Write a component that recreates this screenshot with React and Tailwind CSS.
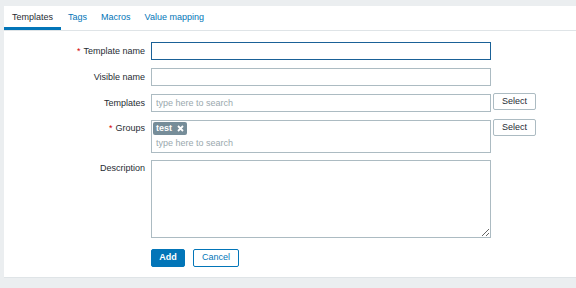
import React from 'react';

const tabs = ['Templates', 'Tags', 'Macros', 'Value mapping'];

const Label = ({ children, required, top }) => (
  <div className={`w-[147px] shrink-0 pr-[6px] text-right ${top ? 'leading-[16px]' : 'leading-[18px]'}`}>
    {required && <span className="text-[#d40000] mr-[3px]">*</span>}
    {children}
  </div>
);

const SelectButton = () => (
  <button className="ml-[2px] -mt-[1px] h-[17px] w-[43px] border border-[#acbbc2] bg-white text-[#1f2c33] rounded-[2px] leading-none">
    Select
  </button>
);

export default function App() {
  return (
    <div
      className="h-[288px] w-[576px] bg-[#ebeef0] pt-[6px] pl-[4px] overflow-hidden text-[9px] text-[#1f2c33]"
      style={{ fontFamily: '"Liberation Sans", Arial, sans-serif' }}
    >
      <div className="h-[272px] bg-white border-b border-[#dfe4e7]">
        {/* Tabs */}
        <div className="flex h-[25px] border-b border-[#dfe4e7]">
          {tabs.map((t, i) => (
            <div
              key={t}
              className={`flex items-center px-[7px] ${
                i === 0 ? 'border-b-[3px] border-[#0275b8] text-[#1f2c33] pt-[3px] pl-[8px] pr-[8px]' : 'text-[#0275b8]'
              }`}
            >
              {t}
            </div>
          ))}
        </div>

        {/* Form */}
        <div className="flex flex-col gap-[8px] pt-[11px]">
          <div className="flex h-[18px]">
            <Label required>Template name</Label>
            <input className="h-[18px] w-[340px] border border-[#1a6197] outline-none" />
          </div>

          <div className="flex h-[18px]">
            <Label>Visible name</Label>
            <input className="h-[18px] w-[340px] border border-[#acbbc2] outline-none" />
          </div>

          <div className="flex h-[18px]">
            <Label>Templates</Label>
            <input
              className="h-[18px] w-[340px] border border-[#acbbc2] px-[4px] outline-none placeholder:text-[#9aa8ae]"
              placeholder="type here to search"
            />
            <SelectButton />
          </div>

          <div className="flex">
            <Label required top>Groups</Label>
            <div className="flex h-[33px] w-[340px] flex-col border border-[#acbbc2] p-[1px]">
              <div className="flex">
                <span className="flex h-[13px] items-center gap-[5px] rounded-[2px] bg-[#768d99] px-[3px] font-bold text-white">
                  test
                  <svg width="7" height="7" viewBox="0 0 7 7">
                    <path d="M1 1 L6 6 M6 1 L1 6" stroke="white" strokeWidth="1.8" />
                  </svg>
                </span>
              </div>
              <div className="mt-[1px] pl-[3px] leading-[14px] text-[#9aa8ae]">type here to search</div>
            </div>
            <SelectButton />
          </div>

          <div className="-mt-[1px] flex">
            <Label top>Description</Label>
            <textarea className="h-[78px] w-[340px] border border-[#acbbc2] outline-none" />
          </div>

          <div className="flex gap-[8px] pl-[147px] pt-[3px]">
            <button className="h-[18px] w-[34px] rounded-[2px] border border-[#0275b8] bg-[#0275b8] font-bold text-white">
              Add
            </button>
            <button className="h-[18px] w-[46px] rounded-[2px] border border-[#0275b8] bg-white text-[#0275b8]">
              Cancel
            </button>
          </div>
        </div>
      </div>
    </div>
  );
}
